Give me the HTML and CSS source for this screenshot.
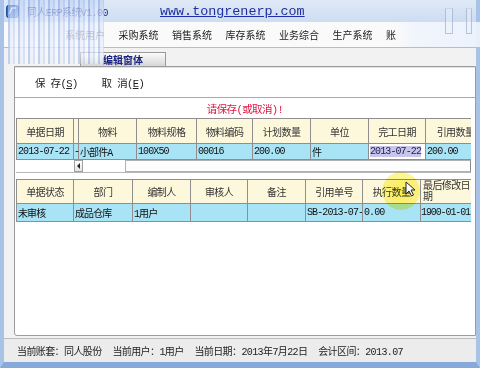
FILE: index.html
```html
<!DOCTYPE html>
<html lang="zh-CN">
<head>
    <meta charset="UTF-8">
    <title>同人ERP系统</title>
    <link rel="stylesheet" href="styles.css">
</head>
<body>
    <div class="window">
        <div class="titlebar">
            <svg class="app-icon" width="13" height="13" viewBox="0 0 13 13">
                <rect x="0.5" y="0.5" width="12" height="12" rx="2" fill="#2f6fc6" stroke="#1c4d99"/>
                <path d="M3 9 L6 3 L10 3" stroke="#fff" stroke-width="1.6" fill="none"/>
            </svg>
            <span class="app-title">同人ERP系统V1.00</span>
            <span class="site">www.tongrenerp.com</span>
        </div>

        <div class="menubar">
            <span class="menu-item">系统用户</span>
            <span class="menu-item">采购系统</span>
            <span class="menu-item">销售系统</span>
            <span class="menu-item">库存系统</span>
            <span class="menu-item">业务综合</span>
            <span class="menu-item">生产系统</span>
            <span class="menu-item">账</span>
        </div>

        <div class="workspace">
            <div class="tabs">
                <div class="tab">编辑窗体</div>
            </div>

            <div class="panel">
                <div class="toolbar">
                    <span class="tool">保 存(<u>S</u>)</span>
                    <span class="tool">取 消(<u>E</u>)</span>
                </div>
                <div class="notice">请保存(或取消)!</div>

                <!-- 主表 -->
                <div class="grid">
                    <table class="grid-main">
                        <colgroup>
                            <col class="w57"><col class="w5"><col class="w58"><col class="w60">
                            <col class="w56"><col class="w58"><col class="w58"><col class="w57"><col class="w60">
                        </colgroup>
                        <tr class="head">
                            <th>单据日期</th><th class="sep"></th><th>物料</th><th>物料规格</th>
                            <th>物料编码</th><th>计划数量</th><th>单位</th><th>完工日期</th><th>引用数量</th>
                        </tr>
                        <tr class="row">
                            <td>2013-07-22</td><td class="sep">-</td><td>小部件A</td><td>100X50</td>
                            <td>00016</td><td>200.00</td><td>件</td><td class="editing"><span>2013-07-22</span></td><td>200.00</td>
                        </tr>
                    </table>
                    <div class="hscroll">
                        <div class="hs-blank"></div>
                        <div class="hs-btn"><span class="hs-arrow"></span></div>
                        <div class="hs-track"></div>
                        <div class="hs-thumb"></div>
                    </div>
                </div>

                <!-- 明细 -->
                <div class="grid grid-second">
                    <span class="row-mark"></span>
                    <div class="clip">
                        <table class="grid-detail">
                            <colgroup>
                                <col class="w57"><col class="w59"><col class="w58"><col class="w57">
                                <col class="w58"><col class="w57"><col class="w58"><col class="w60">
                            </colgroup>
                            <tr class="head">
                                <th>单据状态</th><th>部门</th><th>编制人</th><th>审核人</th>
                                <th>备注</th><th>引用单号</th><th>执行数量</th><th class="wrap">最后修改日<br>期</th>
                            </tr>
                            <tr class="row">
                                <td>未审核</td><td>成品仓库</td><td>1用户</td><td></td>
                                <td></td><td>SB-2013-07-</td><td>0.00</td><td class="tight">1900-01-01</td>
                            </tr>
                        </table>
                    </div>
                </div>
            </div>
        </div>

        <div class="statusbar">当前账套：同人股份&nbsp;&nbsp;当前用户：1用户&nbsp;&nbsp;当前日期：2013年7月22日&nbsp;&nbsp;会计区间：2013.07</div>

        <!-- 窗口切换时的残影 -->
        <div class="ghost ghost-left"></div>
        <div class="ghost ghost-right"></div>
        <div class="ghost-btn btn-a"></div>
        <div class="ghost-btn btn-b"></div>

        <!-- 鼠标高亮 -->
        <div class="spot"></div>
        <svg class="pointer" width="11" height="16" viewBox="0 0 11 16">
            <path d="M1 1 L1 13 L4 10 L6.5 15 L8.5 14 L6 9 L10 9 Z" fill="#fff" stroke="#222" stroke-width="1"/>
        </svg>
    </div>
</body>
</html>
```

FILE: styles.css
```css
* {
    margin: 0;
    padding: 0;
    box-sizing: border-box;
}

body {
    width: 480px;
    height: 368px;
    overflow: hidden;
    font-family: 'Liberation Mono', 'Noto Sans CJK SC', monospace;
    font-size: 10px;
    letter-spacing: -0.6px;
    color: #1e1e1e;
    background: #fff;
}

.window {
    position: relative;
    width: 480px;
    height: 368px;
    display: flex;
    flex-direction: column;
    background: #d7e4f5;
    border-left: 4px solid #a9c3e8;
    border-right: 4px solid #a9c3e8;
    border-bottom: 6px solid #86a9da;
}

/* Title bar */
.titlebar {
    height: 22px;
    display: flex;
    align-items: center;
    background: linear-gradient(#dfe9f7, #cddcf1);
    padding-left: 2px;
}

.app-icon {
    flex-shrink: 0;
}

.app-title {
    margin-left: 8px;
    width: 133px;
    color: #1b2f8c;
    font-size: 10px;
}

.site {
    font-size: 13.4px;
    letter-spacing: 0;
    color: #1d2fa3;
    text-decoration: underline;
}

/* Menu */
.menubar {
    height: 26px;
    display: flex;
    align-items: center;
    padding-left: 61px;
    background: #fafafa;
    border-bottom: 1px solid #bcbcbc;
    font-family: 'Noto Sans CJK SC', sans-serif;
    font-size: 10px;
    letter-spacing: 0;
    color: #222;
}

.menu-item {
    width: 53.5px;
    flex-shrink: 0;
}

/* MDI area */
.workspace {
    flex: 1;
    display: flex;
    flex-direction: column;
    background: #f2f2f2;
    padding: 0 0 2px 10px;
}

.tabs {
    height: 18px;
    display: flex;
    align-items: flex-end;
    padding-left: 66px;
}

.tab {
    width: 86px;
    height: 14px;
    display: flex;
    align-items: center;
    justify-content: center;
    background: linear-gradient(#fbfbfb, #d6d6d6);
    border: 1px solid #9a9a9a;
    border-bottom: none;
    font-family: 'Noto Sans CJK SC', sans-serif;
    font-weight: bold;
    font-size: 10px;
    letter-spacing: 0;
    color: #1a237e;
}

.panel {
    flex: 1;
    background: #fff;
    border: 1px solid #9c9c9c;
    border-radius: 0 0 0 3px;
    overflow: hidden;
}

.toolbar {
    height: 31px;
    display: flex;
    align-items: center;
    gap: 24px;
    padding-left: 20px;
    border-top: 1px solid #e2e2e2;
    border-bottom: 1px solid #a8a8a8;
}

.tool {
    font-size: 10.5px;
    color: #222;
}

.notice {
    height: 20px;
    display: flex;
    align-items: center;
    justify-content: center;
    color: #dc1440;
    font-size: 10.5px;
}

/* Grids */
.grid {
    position: relative;
    margin-left: 1px;
    width: 455px;
    overflow: hidden;
}

.grid-second {
    overflow: visible;
    margin-top: 6px;
}

.clip {
    width: 455px;
    overflow: hidden;
}

table {
    border-collapse: collapse;
    table-layout: fixed;
    width: 469px;
}

.grid-detail {
    width: 464px;
}

col.w5 { width: 5px; }
col.w56 { width: 56px; }
col.w57 { width: 57px; }
col.w58 { width: 58px; }
col.w59 { width: 59px; }
col.w60 { width: 60px; }

th, td {
    border: 1px solid #8e8e8e;
    white-space: nowrap;
    overflow: hidden;
}

.head th {
    height: 25px;
    background: #fdf8dc;
    font-weight: normal;
    color: #333;
    text-align: center;
}

.grid-detail .head th {
    height: 24px;
}

.head th.wrap {
    text-align: left;
    line-height: 11px;
    padding-left: 2px;
}

.row td {
    height: 15px;
    background: #a9e3f6;
    padding-left: 1px;
    letter-spacing: -0.9px;
    color: #111;
}

.grid-detail .row td {
    height: 18px;
}

.row td.tight {
    padding-left: 0;
    letter-spacing: -1.1px;
}

.row td.sep {
    padding: 0;
    overflow: visible;
}

.row td.editing {
    background: #fff;
}

.row td.editing span {
    background: #c7c5e8;
    color: #1c1f5c;
}

.hscroll {
    height: 13px;
    display: flex;
    border-bottom: 1px solid #b7b7b7;
}

.hs-blank {
    width: 58px;
}

.hs-btn {
    width: 9px;
    display: flex;
    align-items: center;
    justify-content: center;
    border: 1px solid #a0a0a0;
    background: linear-gradient(#fff, #e4e4e4);
}

.hs-arrow {
    width: 0;
    height: 0;
    border-top: 3px solid transparent;
    border-bottom: 3px solid transparent;
    border-right: 3px solid #222;
}

.hs-track {
    width: 42px;
}

.hs-thumb {
    flex: 1;
    border: 1px solid #b0b0b0;
    border-right-color: #888;
    background: #fdfdfd;
}

.row-mark {
    position: absolute;
    left: -7px;
    top: 12px;
    width: 0;
    height: 0;
    border-top: 3px solid transparent;
    border-bottom: 3px solid transparent;
    border-left: 3px solid #111;
}

/* Status bar */
.statusbar {
    height: 24px;
    display: flex;
    align-items: center;
    padding-left: 13px;
    background: #ececec;
    border-top: 1px solid #bdbdbd;
    color: #222;
    font-size: 10px;
}

/* Ghost left over from a window switch */
.ghost {
    position: absolute;
    pointer-events: none;
}

.ghost-left {
    left: 4px;
    top: 0;
    width: 96px;
    height: 64px;
    background:
        repeating-linear-gradient(90deg,
            rgba(90, 130, 215, 0.32) 0 2px,
            rgba(170, 195, 240, 0.10) 2px 5px,
            rgba(120, 150, 225, 0.22) 5px 7px,
            rgba(255, 255, 255, 0.15) 7px 10px),
        linear-gradient(rgba(190, 210, 245, 0.55), rgba(235, 240, 252, 0.8) 40%, rgba(245, 248, 255, 0.75) 75%, rgba(255, 255, 255, 0.2));
}

.ghost-right {
    left: 392px;
    top: 22px;
    width: 84px;
    height: 25px;
    background: linear-gradient(90deg, rgba(255, 255, 255, 0), rgba(240, 245, 253, 0.9) 20%, rgba(235, 242, 252, 0.95));
}

.ghost-btn {
    position: absolute;
    top: 8px;
    width: 8px;
    height: 26px;
    border: 1px solid rgba(120, 140, 180, 0.45);
    border-top-color: rgba(120, 140, 180, 0.2);
    background: rgba(235, 240, 250, 0.4);
}

.btn-a {
    left: 441px;
}

.btn-b {
    left: 462px;
    width: 6px;
}

/* Cursor spotlight */
.spot {
    position: absolute;
    left: 378px;
    top: 172px;
    width: 38px;
    height: 38px;
    border-radius: 50%;
    background: radial-gradient(rgba(252, 245, 70, 0.85), rgba(250, 240, 90, 0.6) 70%, rgba(250, 240, 90, 0));
    mix-blend-mode: multiply;
}

.pointer {
    position: absolute;
    left: 401px;
    top: 181px;
}
```
